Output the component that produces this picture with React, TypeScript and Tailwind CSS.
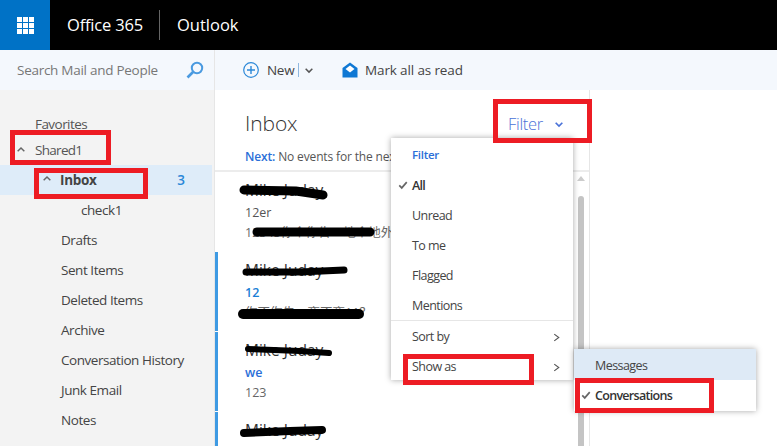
import React from "react";

const font = "font-['Open_Sans','Noto_Sans_CJK_SC',sans-serif]";

function Chevron({ className, d = "M2 4.5 L6 8.5 L10 4.5", w = 1.5 }: { className?: string; d?: string; w?: number }) {
  return (
    <svg viewBox="0 0 12 12" className={className} fill="none" stroke="currentColor" strokeWidth={w}>
      <path d={d} />
    </svg>
  );
}

function Check({ className }: { className?: string }) {
  return (
    <svg viewBox="0 0 12 12" className={className} fill="none" stroke="#666" strokeWidth="2">
      <path d="M1.5 6.5 L4.5 9.5 L10.5 2.5" />
    </svg>
  );
}

function NavRow({ children, indent = "pl-[61px]" }: { children: React.ReactNode; indent?: string }) {
  return <div className={`h-[30px] flex items-center text-[13.5px] tracking-[-0.45px] text-[#444] ${indent}`}>{children}</div>;
}

function Mail({ sender, subject, preview, bar, subjectClass }: { sender: string; subject: string; preview: string; bar: boolean; subjectClass: string }) {
  return (
    <div className="h-[80px] flex">
      <div className={`w-[3px] h-[79px] ${bar ? "bg-[#3e9ae3]" : ""}`} />
      <div className="pl-[27px] pt-[6px] flex flex-col">
        <div className="h-[24px] leading-[24px] text-[15.5px] text-[#333] whitespace-nowrap">{sender}</div>
        <div className={`h-[21px] leading-[21px] text-[12.5px] ${subjectClass}`}>{subject}</div>
        <div className="h-[20px] leading-[20px] text-[12.5px] text-[#666] whitespace-nowrap">{preview}</div>
      </div>
    </div>
  );
}

function MenuItem({ children, arrow, check, bold }: { children: React.ReactNode; arrow?: boolean; check?: boolean; bold?: boolean }) {
  return (
    <div className={`relative h-[30px] flex items-center pt-[2px] pl-[21px] pr-[12px] text-[12.5px] ${bold ? "font-semibold tracking-[-0.7px] text-[#333]" : "tracking-[-0.55px] text-[#444]"}`}>
      {check && <Check className="absolute left-[7px] top-[10px] w-[10px] h-[10px]" />}
      <span className="flex-1">{children}</span>
      {arrow && <Chevron className="w-[9px] h-[11px] text-[#555]" d="M3 1.5 L9 6 L3 10.5" />}
    </div>
  );
}

function RedBox({ className }: { className: string }) {
  return <div className={`absolute border-[5px] border-[#ed1c24] ${className}`} />;
}

export default function App() {
  return (
    <div className={`relative w-[777px] h-[446px] overflow-hidden bg-white ${font}`}>
      {/* Top bar */}
      <header className="h-[50px] bg-black flex items-center text-white">
        <div className="w-[50px] h-[50px] bg-[#0072c6] flex items-center justify-center">
          <div className="grid grid-cols-[5px_5px_5px] gap-[1px]">
            {Array.from({ length: 9 }).map((_, i) => (
              <div key={i} className="w-[5px] h-[5px] bg-white" />
            ))}
          </div>
        </div>
        <div className="ml-[17px] text-[16.5px] tracking-[-0.2px] w-[92px]">Office 365</div>
        <div className="w-px h-[30px] bg-[#666]" />
        <div className="ml-[17px] text-[16.5px]">Outlook</div>
      </header>

      <div className="flex h-[396px]">
        {/* Left column */}
        <aside className="w-[214px] shrink-0 flex flex-col">
          <div className="h-[40px] bg-[#f4f8fd] flex items-center pl-[17px] pr-[10px] justify-between">
            <span className="text-[13.5px] tracking-[-0.27px] text-[#777]">Search Mail and People</span>
            <svg viewBox="0 0 18 18" className="w-[18px] h-[18px]" fill="none" stroke="#4a9ae0" strokeWidth="2">
              <circle cx="11" cy="7" r="5.2" />
              <path d="M7 11 L1.5 16.5" strokeWidth="2.6" />
            </svg>
          </div>
          <nav className="flex-1 bg-[#f3f3f3] pt-[19px]">
            <div className="h-[30px] flex items-center pl-[35px] text-[13.5px] tracking-[-0.55px] text-[#555] mb-[-4px]">Favorites</div>
            <div className="h-[30px] flex items-center pl-[35px] text-[13.5px] tracking-[-0.7px] text-[#555] relative">
              <Chevron className="absolute left-[17px] top-[11px] w-[8px] h-[8px] text-[#666]" d="M1 8 L6 3 L11 8" w={2.2} />
              Shared1
            </div>
            <div className="relative h-[30px] w-[212px] bg-[#deecf9] flex items-center pl-[60px] text-[13.5px] font-bold text-[#444]">
              <Chevron className="absolute left-[43px] top-[10px] w-[8px] h-[8px] text-[#666]" d="M1 8 L6 3 L11 8" w={2.2} />
              <span className="flex-1 tracking-[-0.3px]">Inbox</span>
              <span className="font-semibold text-[#2b88d8] mr-[27px]">3</span>
            </div>
            <NavRow indent="pl-[81px]">check1</NavRow>
            <NavRow>Drafts</NavRow>
            <NavRow>Sent Items</NavRow>
            <NavRow>Deleted Items</NavRow>
            <NavRow>Archive</NavRow>
            <NavRow>Conversation History</NavRow>
            <NavRow>Junk Email</NavRow>
            <NavRow>Notes</NavRow>
          </nav>
        </aside>
        <div className="w-px bg-[#e6e6e6]" />

        {/* Main */}
        <main className="flex-1 flex flex-col min-w-0">
          <div className="h-[40px] bg-[#f4f8fd] flex items-center pl-[28px] text-[13.5px] text-[#444]">
            <svg viewBox="0 0 16 16" className="w-[16px] h-[16px] mr-[8px]" fill="none" stroke="#2b88d8" strokeWidth="1.2">
              <circle cx="8" cy="8" r="7.3" />
              <path d="M8 4 V12 M4 8 H12" strokeWidth="1.4" />
            </svg>
            <span className="w-[27px] tracking-[-0.3px]">New</span>
            <span className="ml-[4px] mr-[5px] w-px h-[14px] bg-[#8fb8e0]" />
            <Chevron className="w-[10px] h-[10px] text-[#555]" w={1.8} />
            <svg viewBox="0 0 16 16" className="w-[16px] h-[16px] ml-[28px] mr-[7px]">
              <path d="M0.5 6 L8 0.5 L15.5 6 V15.5 H0.5 Z" fill="#0f78d4" />
              <path d="M3.5 7 L8 3.5 L12.5 7 L8 10.5 Z" fill="#fff" />
            </svg>
            <span className="tracking-[-0.13px]">Mark all as read</span>
          </div>

          <div className="flex flex-1 min-h-0">
            <section className="w-[375px] border-r border-[#e6e6e6] flex flex-col">
              <div className="h-[82px] shrink-0 border-b-2 border-[#ececec] pl-[30px] relative">
                <div className="pt-[15px] text-[21px] leading-[36px] font-light tracking-[-0.1px] text-[#333]">Inbox</div>
                <div className="absolute left-[293px] top-[22px] flex items-center text-[#4a72d8] text-[16.5px] leading-[24px] font-light tracking-[-0.3px]">
                  Filter
                  <Chevron className="ml-[11px] w-[10px] h-[10px]" w={2} />
                </div>
                <div className="pt-[6px] text-[12px] leading-[20px] tracking-[-0.15px] text-[#555] whitespace-nowrap">
                  <span className="font-semibold text-[#2b6fd8]">Next:</span> No events for the next
                </div>
              </div>
              <div className="flex-1 overflow-hidden">
                <Mail sender="Mike Juday" subject="12er" preview="12345你个你告一地个地外？" bar={false} subjectClass="text-[#555]" />
                <Mail sender="Mike Juday" subject="12" preview="你不你告一夜不夜11？" bar subjectClass="text-[#1a7fd6] font-semibold" />
                <Mail sender="Mike Juday" subject="we" preview="123" bar subjectClass="text-[#2b6fd8] font-semibold" />
                <Mail sender="Mike Juday" subject="" preview="" bar subjectClass="" />
              </div>
            </section>
            <div className="flex-1" />
          </div>
        </main>
      </div>

      {/* Black scribbles over the redacted names */}
      <svg className="absolute inset-0 w-[777px] h-[446px] pointer-events-none" fill="none" stroke="#000" strokeLinecap="round">
        <path d="M244 190 L296 191 L323 195" strokeWidth="9" />
        <path d="M257 232 L370 232" strokeWidth="9" />
        <path d="M246 272 L300 272 L344 270" strokeWidth="7" />
        <path d="M243 314 L359 314" strokeWidth="10" />
        <path d="M248 349 L300 351 L329 353" strokeWidth="6" />
        <path d="M244 433 L290 431 L322 430" strokeWidth="8" />
      </svg>

      {/* Scrollbar next to the open menu */}
      <div className="absolute left-[578px] top-[176px] w-[6px] h-[270px] flex flex-col items-center">
        <div className="w-0 h-0 border-l-[4px] border-r-[4px] border-b-[5px] border-l-transparent border-r-transparent border-b-[#ccc]" />
        <div className="mt-[15px] flex-1 w-[6px] bg-[#c4c4c4] rounded-t-[3px]" />
      </div>

      {/* Filter menu */}
      <div className="absolute left-[391px] top-[138px] w-[182px] h-[242px] bg-white shadow-[0_0_6px_rgba(0,0,0,0.35)]">
        <div className="h-[32px] flex items-center pl-[21px] pt-[1px] text-[11.5px] font-semibold tracking-[-0.3px] text-[#2b6fd8]">Filter</div>
        <MenuItem check bold>All</MenuItem>
        <MenuItem>Unread</MenuItem>
        <MenuItem>To me</MenuItem>
        <MenuItem>Flagged</MenuItem>
        <MenuItem>Mentions</MenuItem>
        <div className="h-px bg-[#e6e6e6]" />
        <MenuItem arrow>Sort by</MenuItem>
        <MenuItem arrow>Show as</MenuItem>
      </div>

      {/* Show-as submenu */}
      <div className="absolute left-[574px] top-[349px] w-[182px] h-[62px] bg-white shadow-[0_0_6px_rgba(0,0,0,0.35)]">
        <div className="h-[31px] bg-[#deeaf6] flex items-center pt-[3px] pl-[21px] text-[12.5px] tracking-[-0.55px] text-[#444]">Messages</div>
        <MenuItem check bold>Conversations</MenuItem>
      </div>

      {/* Red annotation boxes */}
      <RedBox className="left-[10px] top-[130px] w-[101px] h-[35px]" />
      <RedBox className="left-[34px] top-[168px] w-[114px] h-[31px]" />
      <RedBox className="left-[493px] top-[99px] w-[99px] h-[44px]" />
      <RedBox className="left-[403px] top-[354px] w-[131px] h-[31px]" />
      <RedBox className="left-[575px] top-[378px] w-[139px] h-[35px]" />
    </div>
  );
}
